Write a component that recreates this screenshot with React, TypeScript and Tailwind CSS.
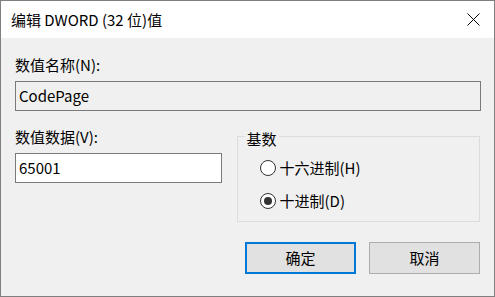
export default function App() {
  return (
    <div className="w-[495px] h-[297px] flex flex-col border border-[#7f7f7f] bg-[#f0f0f0] text-[15px] text-black font-['Noto_Sans_CJK_SC','Noto_Sans',sans-serif] leading-[20px]">
      {/* Title bar */}
      <div className="h-[37px] shrink-0 bg-white flex items-center justify-between pl-[10px] pr-[14px]">
        <span>编辑 DWORD (32 位)值</span>
        <svg className="w-[13px] h-[13px]" viewBox="0 0 13 13" fill="none" stroke="#000" strokeWidth={1}>
          <path d="M0.5 0.5L12.5 12.5M12.5 0.5L0.5 12.5" />
        </svg>
      </div>

      {/* Body */}
      <div className="flex flex-col px-[14px] pt-[17px]">
        <label>数值名称(N):</label>
        <div className="mt-[6px] h-[30px] w-[466px] border border-[#7a7a7a] flex items-center pl-[3px]">
          CodePage
        </div>

        <div className="flex gap-[15px] mt-[16px]">
          <div className="flex flex-col w-[207px]">
            <label>数值数据(V):</label>
            <div className="mt-[6px] h-[30px] bg-white border border-[#7a7a7a] flex items-center pl-[3px]">
              65001
            </div>
          </div>

          {/* Base group */}
          <div className="relative mt-[9px] w-[244px] h-[86px] border border-[#dcdcdc] flex flex-col pl-[22px] pt-[23px] gap-[17px]">
            <span className="absolute left-[7px] top-[-6px] px-[2px] bg-[#f0f0f0] leading-[15px]">基数</span>
            <div className="flex items-center gap-[4px] h-[16px]">
              <span className="w-[16px] h-[16px] shrink-0 rounded-full border border-[#333] bg-white" />
              <span>十六进制(H)</span>
            </div>
            <div className="flex items-center gap-[4px] h-[16px]">
              <span className="w-[16px] h-[16px] shrink-0 rounded-full border border-[#333] bg-white flex items-center justify-center">
                <span className="w-[8px] h-[8px] rounded-full bg-[#333]" />
              </span>
              <span>十进制(D)</span>
            </div>
          </div>
        </div>

        {/* Buttons */}
        <div className="flex justify-end gap-[13px] mt-[20px]">
          <button className="w-[111px] h-[32px] bg-[#e1e1e1] border-2 border-[#0078d7] flex items-center justify-center">
            确定
          </button>
          <button className="w-[111px] h-[32px] bg-[#e1e1e1] border border-[#adadad] flex items-center justify-center">
            取消
          </button>
        </div>
      </div>
    </div>
  );
}
